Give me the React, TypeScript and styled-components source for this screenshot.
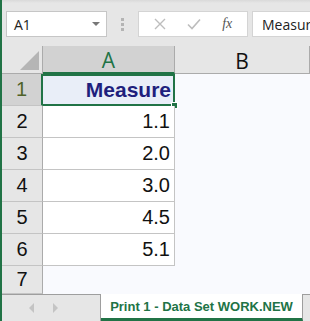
import React from 'react';
import styled, { createGlobalStyle, css } from 'styled-components';

const GlobalStyle = createGlobalStyle`
  html, body {
    margin: 0;
    padding: 0;
    width: 310px;
    height: 321px;
    overflow: hidden;
    background: #e6e6e6;
  }
  * {
    box-sizing: border-box;
  }
`;

const GREEN = '#217346';

const Window = styled.div`
  display: flex;
  flex-direction: column;
  width: 310px;
  height: 321px;
  border-left: 2px solid ${GREEN};
  font-family: 'Liberation Sans', Arial, sans-serif;
  overflow: hidden;
`;

const FormulaBar = styled.div`
  display: flex;
  align-items: flex-start;
  height: 46px;
  padding: 11px 0 0 4px;
  background: linear-gradient(#d9d9d9 0px, #e6e6e6 3px);
  flex-shrink: 0;
`;

const NameBox = styled.div`
  display: flex;
  align-items: center;
  justify-content: space-between;
  width: 101px;
  height: 26px;
  padding: 0 6px 0 7px;
  background: #fff;
  border: 1px solid #c6c6c6;
  font-family: 'Open Sans', 'Liberation Sans', sans-serif;
  font-size: 14px;
  color: #222;
`;

const Caret = styled.span`
  width: 0;
  height: 0;
  border-left: 4px solid transparent;
  border-right: 4px solid transparent;
  border-top: 4px solid #777;
`;

const Grip = styled.div`
  display: flex;
  flex-direction: column;
  align-items: center;
  justify-content: center;
  gap: 2px;
  width: 31px;
  height: 26px;

  span {
    width: 3px;
    height: 3px;
    background: #b4b4b4;
  }
`;

const ActionBox = styled.div`
  display: flex;
  align-items: center;
  justify-content: space-around;
  width: 110px;
  height: 26px;
  padding: 0 4px;
  background: #fff;
  border: 1px solid #d4d4d4;
`;

const Fx = styled.span`
  font-family: 'Liberation Serif', 'Times New Roman', serif;
  font-style: italic;
  font-size: 14px;
  color: #555;
`;

const FormulaInput = styled.div`
  flex: 1;
  height: 26px;
  margin-left: 4px;
  padding: 3px 0 0 9px;
  background: #fff;
  border: 1px solid #d4d4d4;
  border-right: none;
  font-family: 'Open Sans', 'Liberation Sans', sans-serif;
  font-size: 14px;
  color: #222;
  white-space: nowrap;
  overflow: hidden;
`;

const Sheet = styled.div`
  display: grid;
  grid-template-columns: 41px 132px 1fr;
  grid-template-rows: 28px repeat(6, 32px) 28px;
  flex-shrink: 0;
  background: #f9fafe;
`;

const Corner = styled.div`
  position: relative;
  background: #e6e6e6;
  border-right: 1px solid #ababab;
  border-bottom: 1px solid #ababab;

  &::after {
    content: '';
    position: absolute;
    right: 3px;
    bottom: 3px;
    width: 0;
    height: 0;
    border-left: 19px solid transparent;
    border-bottom: 19px solid #b5b5b5;
  }
`;

const ColHeader = styled.div<{ $active?: boolean }>`
  display: flex;
  align-items: center;
  justify-content: center;
  padding-top: 2px;
  font-family: 'Open Sans', 'Liberation Sans', sans-serif;
  font-size: 21px;
  color: #111;
  background: #e6e6e6;
  border-right: 1px solid #ababab;
  border-bottom: 1px solid #ababab;
  ${p => p.$active && css`
    background: #d2d2d2;
    color: ${GREEN};
    border-bottom: 2px solid ${GREEN};
  `}
`;

const RowHeader = styled.div<{ $active?: boolean }>`
  display: flex;
  align-items: center;
  justify-content: center;
  font-size: 20px;
  color: #111;
  background: #e6e6e6;
  border-right: 1px solid #ababab;
  border-bottom: 1px solid #c4c4c4;
  ${p => p.$active && css`
    background: #d2d2d2;
    color: #4f6228;
    border-right: 2px solid ${GREEN};
  `}
`;

const Cell = styled.div<{ $filled?: boolean; $selected?: boolean }>`
  position: relative;
  display: flex;
  align-items: center;
  justify-content: flex-end;
  padding-right: 4px;
  font-size: 20px;
  color: #111;
  ${p => p.$filled && css`
    background: #fff;
    border-right: 1px solid #c4c4c4;
    border-bottom: 1px solid #c4c4c4;
  `}
  ${p => p.$selected && css`
    background: #e9eef8;
    border: 2px solid ${GREEN};
    border-left: none;
    font-size: 21px;
    font-weight: bold;
    color: #1f1f7d;
    padding-right: 2px;
  `}
`;

const FillHandle = styled.span`
  position: absolute;
  right: -5px;
  bottom: -5px;
  width: 7px;
  height: 7px;
  background: ${GREEN};
  border: 1px solid #fff;
`;

const TabBar = styled.div`
  display: flex;
  flex: 1;
  background: #e6e6e6;
`;

const TabNav = styled.div`
  display: flex;
  align-items: center;
  gap: 19px;
  width: 99px;
  padding-left: 27px;
  border-top: 1px solid #9e9e9e;
  border-right: 1px solid #9e9e9e;
`;

const NavArrow = styled.span<{ $dir: 'left' | 'right' }>`
  width: 0;
  height: 0;
  border-top: 5px solid transparent;
  border-bottom: 5px solid transparent;
  ${p => p.$dir === 'left'
    ? css`border-right: 5px solid #c4c4c4;`
    : css`border-left: 5px solid #c4c4c4;`}
`;

const Tab = styled.div`
  display: flex;
  align-items: center;
  justify-content: center;
  width: 202px;
  padding-top: 1px;
  background: #fff;
  border-right: 1px solid #9e9e9e;
  border-bottom: 3px solid ${GREEN};
  font-size: 13px;
  font-weight: bold;
  color: ${GREEN};
  white-space: nowrap;
`;

const TabRest = styled.div`
  flex: 1;
  border-top: 1px solid #9e9e9e;
`;

const values = ['1.1', '2.0', '3.0', '4.5', '5.1'];

export default function App() {
  return (
    <>
      <GlobalStyle />
      <Window>
        <FormulaBar>
          <NameBox>
            A1
            <Caret />
          </NameBox>
          <Grip>
            <span />
            <span />
            <span />
          </Grip>
          <ActionBox>
            <svg width="12" height="12" viewBox="0 0 12 12">
              <path d="M1 1 L11 11 M11 1 L1 11" stroke="#bdbdbd" strokeWidth="1.4" fill="none" />
            </svg>
            <svg width="14" height="12" viewBox="0 0 14 12">
              <path d="M1 6.5 L5 10.5 L13 1.5" stroke="#bdbdbd" strokeWidth="1.6" fill="none" />
            </svg>
            <Fx>fx</Fx>
          </ActionBox>
          <FormulaInput>Measure</FormulaInput>
        </FormulaBar>

        <Sheet>
          <Corner />
          <ColHeader $active>A</ColHeader>
          <ColHeader>B</ColHeader>

          <RowHeader $active>1</RowHeader>
          <Cell $selected>
            Measure
            <FillHandle />
          </Cell>
          <Cell />

          {values.map((v, i) => (
            <React.Fragment key={v}>
              <RowHeader>{i + 2}</RowHeader>
              <Cell $filled>{v}</Cell>
              <Cell />
            </React.Fragment>
          ))}

          <RowHeader>7</RowHeader>
          <Cell />
          <Cell />
        </Sheet>

        <TabBar>
          <TabNav>
            <NavArrow $dir="left" />
            <NavArrow $dir="right" />
          </TabNav>
          <Tab>Print 1 - Data Set WORK.NEW</Tab>
          <TabRest />
        </TabBar>
      </Window>
    </>
  );
}
